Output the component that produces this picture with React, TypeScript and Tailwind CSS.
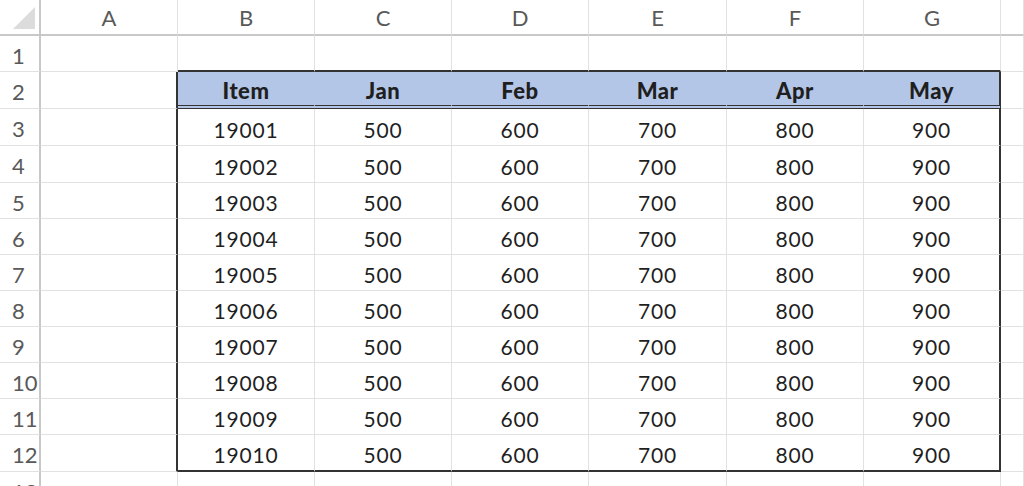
const colLetters = ['A', 'B', 'C', 'D', 'E', 'F', 'G', ''];
const months = ['Item', 'Jan', 'Feb', 'Mar', 'Apr', 'May'];

const rowHeights = [36, 37, 37, 37, 36, 36, 36, 36, 36, 36, 36, 37, 36];

const rows: string[][] = Array.from({ length: 13 }, (_, i) => {
  const r = i + 1;
  if (r === 2) return ['', ...months, ''];
  if (r >= 3 && r <= 12) return ['', String(19001 + (r - 3)), '500', '600', '700', '800', '900', ''];
  return ['', '', '', '', '', '', '', ''];
});

const inTableCol = (c: number) => c >= 1 && c <= 6;
const inTableRow = (r: number) => r >= 2 && r <= 12;

const cellClass = (r: number, c: number) => {
  let right = 'border-r border-r-[#e1e1e1]';
  if (inTableRow(r) && (c === 0 || c === 6)) right = 'border-r-2 border-r-[#333333]';
  else if (r === 2 && inTableCol(c)) right = 'border-r border-r-[#b4c6e7]';
  let bottom = 'border-b border-b-[#e1e1e1]';
  if (inTableCol(c) && (r === 1 || r === 12)) bottom = 'border-b-2 border-b-[#333333]';
  if (inTableCol(c) && r === 2) bottom = 'border-b-4 border-double border-b-[#333333]';
  const text =
    r === 2 && inTableCol(c)
      ? 'bg-[#b4c6e7] text-[22px] font-black tracking-[0.5px] pt-[3px]'
      : 'text-[21px] tracking-[0.8px] pt-[5px]';
  return `flex items-center justify-center ${right} ${bottom} ${text}`;
};

const App = () => {
  return (
    <div className="h-[486px] w-[1024px] overflow-hidden bg-white font-[family-name:Lato,sans-serif]">
      <div className="grid grid-cols-[41px_137px_137px_137px_137px_138px_137px_137px_1fr]">
        {/* corner */}
        <div className="flex h-[36px] items-end justify-end border-r-2 border-b-2 border-r-[#c8c8c8] border-b-[#c8c8c8] pr-[4px] pb-[5px]">
          <svg width="22" height="22" viewBox="0 0 22 22">
            <polygon points="0,22 22,22 22,0" fill="#dcdcdc" />
          </svg>
        </div>
        {colLetters.map((l, i) => (
          <div
            key={`h${i}`}
            className="flex h-[36px] items-center justify-center border-r border-b-2 border-r-[#e1e1e1] border-b-[#c8c8c8] text-[22px] text-[#595959]"
          >
            {l}
          </div>
        ))}

        {rows.map((cells, i) => {
          const r = i + 1;
          return [
            <div
              key={`n${r}`}
              style={{ height: rowHeights[i] }}
              className="flex items-center border-r-2 border-b border-r-[#c8c8c8] border-b-[#e1e1e1] pt-[3px] pl-[12px] text-[22px] text-[#595959]"
            >
              {r}
            </div>,
            ...cells.map((v, c) => (
              <div
                key={`c${r}-${c}`}
                style={{ height: rowHeights[i] }}
                className={`${cellClass(r, c)} text-[#1f1f1f]`}
              >
                {v}
              </div>
            )),
          ];
        })}
      </div>
    </div>
  );
};

export default App;
